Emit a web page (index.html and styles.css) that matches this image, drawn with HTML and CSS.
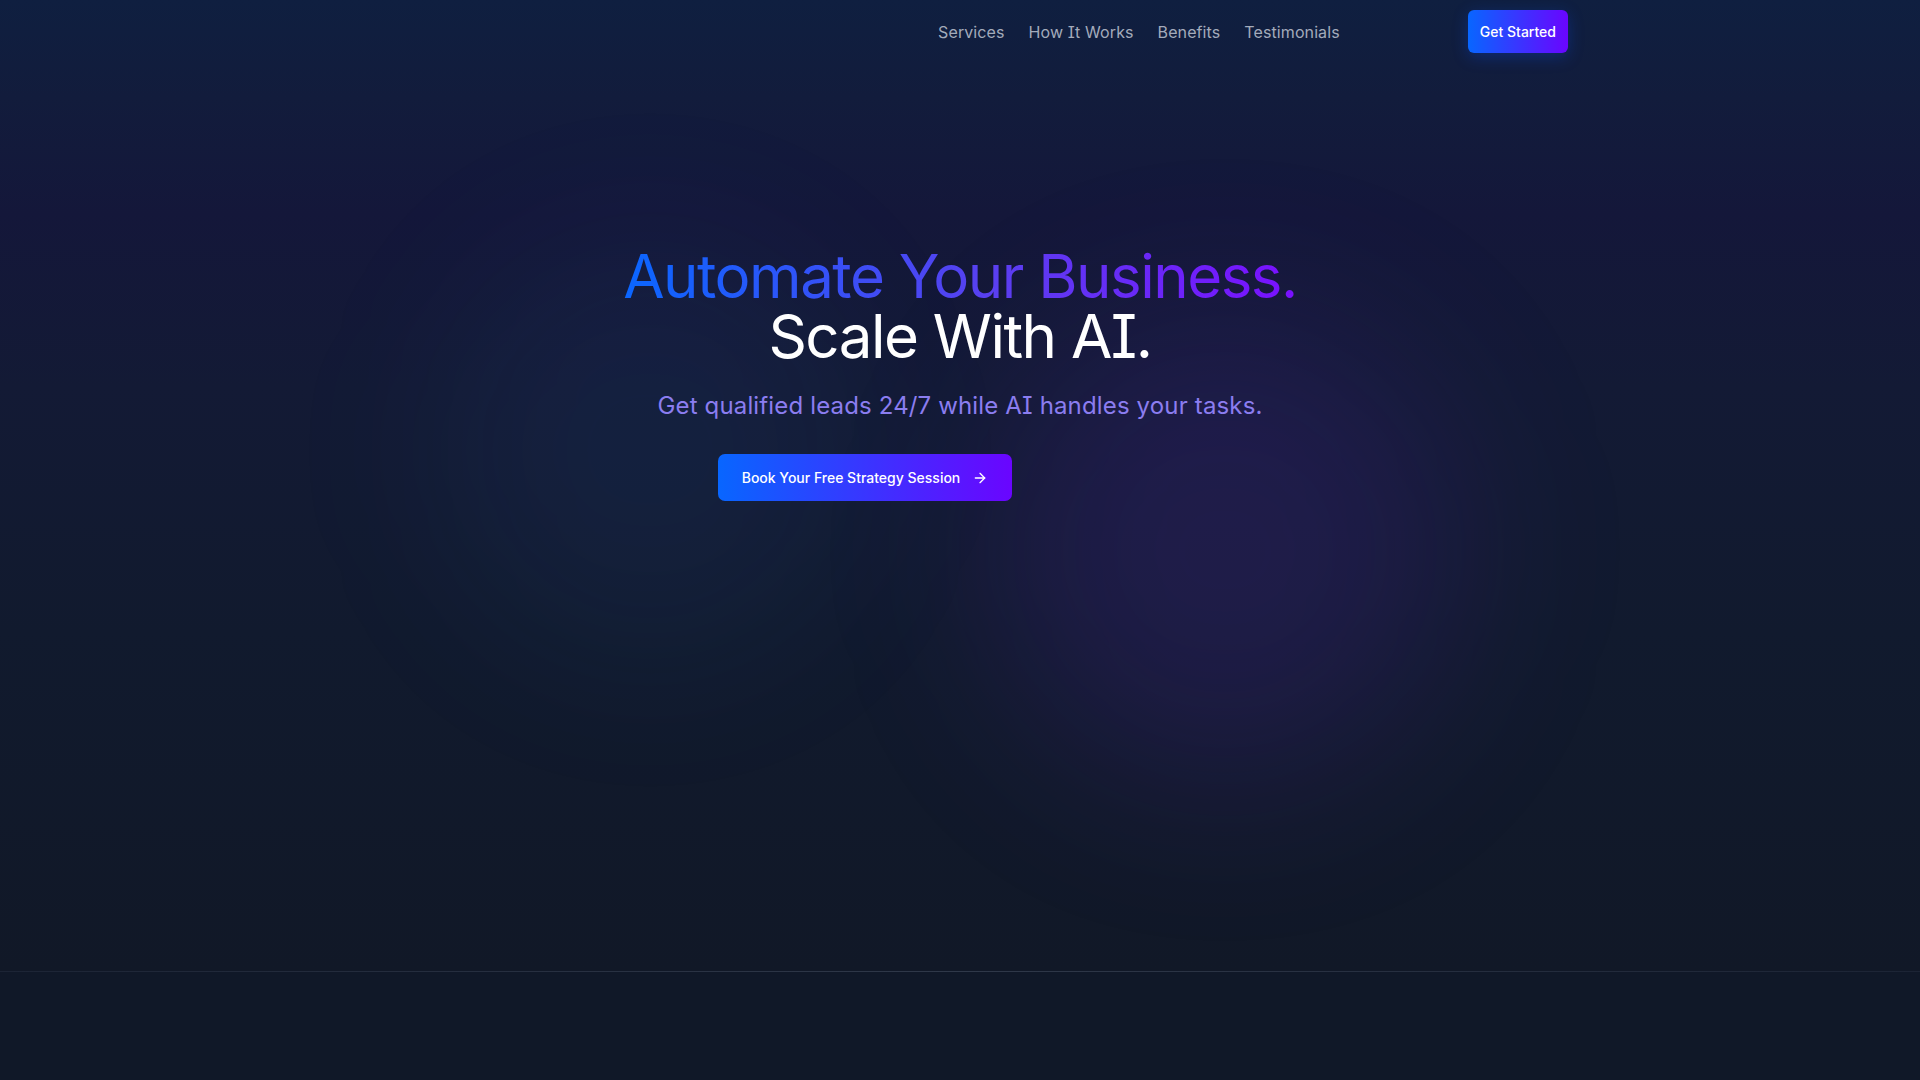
FILE: index.html
```html
<!DOCTYPE html>
<html lang="en">
<head>
<meta charset="utf-8">
<title>Automate Your Business. Scale With AI.</title>
<link rel="stylesheet" href="styles.css">
</head>
<body>
<div class="page">
  <div class="top">
    <div class="glow glow-blue"></div>
    <div class="glow glow-purple"></div>
    <header class="site-header">
      <div class="container nav-row">
        <div class="logo-slot" aria-hidden="true"></div>
        <nav class="links">
          <a href="#services">Services</a>
          <a href="#how">How It Works</a>
          <a href="#benefits">Benefits</a>
          <a href="#testimonials">Testimonials</a>
        </nav>
        <a class="btn-small" href="#start">Get Started</a>
      </div>
    </header>
    <section class="hero">
      <div class="hero-content">
        <h1 class="headline">
          <span class="line grad">Automate Your Business.</span>
          <span class="line">Scale With AI.</span>
        </h1>
        <p class="sub">Get qualified leads 24/7 while AI handles your tasks.</p>
        <div class="actions">
          <a class="btn-primary" href="#book">Book Your Free Strategy Session
            <svg class="arrow" width="16" height="16" viewBox="0 0 24 24" fill="none" stroke="currentColor" stroke-width="2" stroke-linecap="round" stroke-linejoin="round"><path d="M5 12h14"/><path d="m12 5 7 7-7 7"/></svg>
          </a>
          <a class="btn-ghost" href="#demo">Watch Demo</a>
        </div>
      </div>
    </section>
  </div>
  <section class="next"></section>
</div>
</body>
</html>
```

FILE: styles.css
```css
* { box-sizing: border-box; }
html, body { margin: 0; padding: 0; }
body {
  background: #111827;
  font-family: Inter, "Noto Sans", "Liberation Sans", sans-serif;
  font-feature-settings: "cv08" 1;
  color: #fff;
  overflow: hidden;
}
a { text-decoration: none; color: inherit; }

.page { width: 1920px; min-height: 1080px; }

.top {
  position: relative;
  overflow: hidden;
  background: linear-gradient(to bottom, #0f1f40 0%, #121c3c 10%, #14173a 22%, #131a35 40%, #111a2e 65%, #111827 100%);
  height: 971px;
}

.glow {
  position: absolute;
  border-radius: 50%;
  pointer-events: none;
}
.glow-blue {
  width: 420px;
  height: 420px;
  left: 440px;
  top: 240px;
  filter: blur(80px);
  background: rgba(59, 130, 246, 0.06);
}
.glow-purple {
  width: 460px;
  height: 460px;
  left: 995px;
  top: 320px;
  filter: blur(85px);
  background: rgba(109, 40, 217, 0.15);
}

.site-header { position: relative; z-index: 2; height: 64px; }
.container { max-width: 1280px; margin: 0 auto; padding: 0 32px; }
.nav-row {
  height: 64px;
  display: flex;
  align-items: center;
  justify-content: space-between;
}
.logo-slot { width: 458px; height: 40px; }
.links { display: flex; gap: 24px; align-items: center; }
.links a {
  font-size: 16px;
  line-height: 24px;
  color: #a3abbb;
  letter-spacing: 0.1px;
}
.btn-small {
  display: inline-flex;
  align-items: center;
  height: 43px;
  padding: 0 12px;
  border-radius: 6px;
  font-size: 14px;
  font-weight: 500;
  color: #fff;
  background: linear-gradient(to right, #0866ff, #6a05ff);
  box-shadow: 0 4px 16px rgba(10, 80, 255, 0.28);
  margin-top: -1px;
}

.hero { position: relative; z-index: 1; }
.hero-content {
  padding-top: 182px;
  display: flex;
  flex-direction: column;
  align-items: center;
  text-align: center;
}
.headline {
  margin: 0 0 24px;
  font-size: 60px;
  line-height: 60px;
  font-weight: 400;
  letter-spacing: -1.5px;
}
.line { display: block; }
.grad {
  background: linear-gradient(to right, #0a66ff 0%, #5a3ff0 55%, #7a10ff 100%);
  -webkit-background-clip: text;
  background-clip: text;
  color: transparent;
}
.sub {
  margin: 0 0 32px;
  font-size: 24px;
  line-height: 32px;
  color: #8b7df0;
  letter-spacing: 0.15px;
}
.actions { display: flex; gap: 16px; justify-content: center; }
.btn-primary {
  display: inline-flex;
  align-items: center;
  gap: 12px;
  height: 47px;
  padding: 0 24px;
  border-radius: 7px;
  font-size: 14px;
  font-weight: 500;
  color: #fff;
  background: linear-gradient(to right, #0866ff, #6a05ff);
}
.arrow { display: block; }
.btn-ghost {
  visibility: hidden;
  display: inline-flex;
  align-items: center;
  width: 174px;
  height: 47px;
  justify-content: center;
  border-radius: 7px;
  font-size: 16px;
}

.next {
  height: 109px;
  background: #101828;
  border-top: 1px solid transparent;
  border-image: linear-gradient(to right, #1c2435, #2f3849 50%, #1c2435) 1;
}
```
